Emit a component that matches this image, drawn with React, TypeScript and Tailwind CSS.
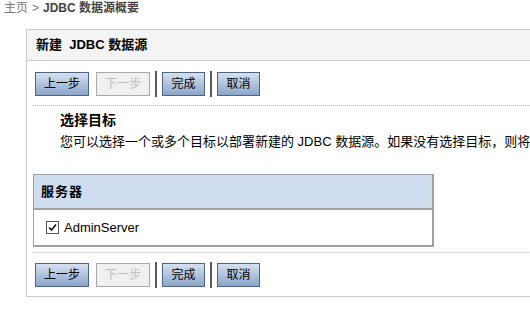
import React from 'react';

const FONT = "font-['Liberation_Sans','Noto_Sans_CJK_SC',sans-serif]";

interface StepButtonProps {
  label: string;
  disabled?: boolean;
  wide?: boolean;
}

function StepButton({ label, disabled, wide }: StepButtonProps) {
  const size = wide ? 'w-[54px]' : 'w-[43px]';
  if (disabled) {
    return (
      <button
        className={`${size} h-[24px] border border-[#a9a9a9] bg-[#f0f0f0] text-[12px] text-[#c0c0c0] flex items-center justify-center`}
      >
        {label}
      </button>
    );
  }
  return (
    <button
      className={`${size} h-[24px] border border-[#4c6584] bg-gradient-to-b from-[#d6e0f1] to-[#8ba6c9] text-[12px] text-black flex items-center justify-center`}
    >
      {label}
    </button>
  );
}

function Separator() {
  return <div className="w-[2px] h-[26px] bg-[#5a5a5a] mx-[5px]" />;
}

function ButtonRow() {
  return (
    <div className="flex items-center pl-[8px]">
      <StepButton label="上一步" wide />
      <div className="w-[7px]" />
      <StepButton label="下一步" wide disabled />
      <Separator />
      <StepButton label="完成" />
      <div className="w-[12px] flex justify-center">
        <div className="w-[2px] h-[26px] bg-[#5a5a5a]" />
      </div>
      <StepButton label="取消" />
    </div>
  );
}

function DottedLine() {
  return <div className="ml-[6px] border-t border-dotted border-[#b8b8b8]" />;
}

export default function App() {
  return (
    <div className={`${FONT} w-[530px] h-[314px] overflow-hidden bg-white`}>
      {/* breadcrumb */}
      <div className="h-[16px] pl-[4px] flex items-center text-[12px] text-[#777] whitespace-nowrap">
        <span>主页</span>
        <span className="mx-[4px]">&gt;</span>
        <span className="font-bold text-[#444]">JDBC 数据源概要</span>
      </div>

      {/* panel */}
      <div className="ml-[26px] mt-[13px] w-[560px] h-[268px] border border-r-0 border-[#cccccc]">
        <div className="h-[31px] bg-[#f4f4f4] border-b border-[#cccccc] pl-[9px] flex items-center">
          <span className="text-[13px] font-bold text-black whitespace-pre">新建  JDBC 数据源</span>
        </div>

        <div className="pt-[10px]">
          <ButtonRow />
        </div>
        <div className="mt-[8px]">
          <DottedLine />
        </div>

        <div className="pl-[33px] pt-[4px] whitespace-nowrap">
          <div className="text-[14px] leading-[20px] font-bold text-black">选择目标</div>
          <div className="mt-[2px] text-[13px] leading-[20px] text-black">
            您可以选择一个或多个目标以部署新建的 JDBC 数据源。如果没有选择目标，则将仅创建数据源，但不部署。
          </div>
        </div>

        {/* targets table */}
        <div className="ml-[6px] mt-[22px] w-[401px] border border-[#a0a0a0] border-r-2 border-b-2">
          <div className="h-[35px] bg-[#d0ddef] border-b-2 border-[#a0a0a0] pl-[7px] flex items-center">
            <span className="text-[13px] font-bold text-black tracking-[1px]">服务器</span>
          </div>
          <div className="h-[35px] pl-[12px] flex items-center gap-[5px]">
            <div className="w-[13px] h-[13px] border border-[#555] bg-white flex items-center justify-center">
              <svg width="9" height="9" viewBox="0 0 9 9">
                <path d="M1 4.5 L3.5 7 L8 1.5" fill="none" stroke="#111" strokeWidth="1.6" />
              </svg>
            </div>
            <span className="text-[13px] text-black">AdminServer</span>
          </div>
        </div>

        <div className="mt-[5px]">
          <DottedLine />
        </div>
        <div className="pt-[9px]">
          <ButtonRow />
        </div>
      </div>
    </div>
  );
}
